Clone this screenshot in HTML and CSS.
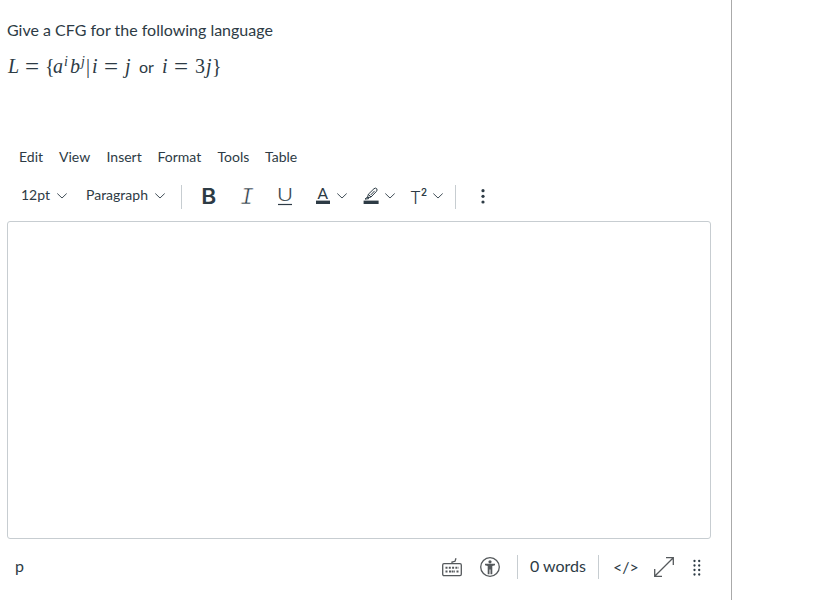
FILE: index.html
```html
<!DOCTYPE html>
<html lang="en">
    <head>
        <meta charset="UTF-8"><meta name="viewport" content="width=device-width, initial-scale=1.0"><title>Question</title>
        <link rel="stylesheet" href="styles.css">
    </head>
    <body>
        <div class="question">
            <p class="prompt">Give a CFG for the following language</p>
            <div class="math">
                <i class="cap">L</i><span class="rel">=</span><span class="brace">{</span><i class="base-a">a</i><sup class="sup-i">i</sup><i class="base-b">b</i><sup class="sup-j">j</sup><span class="bar">|</span><i class="var-i">i</i><span class="rel">=</span><i class="var-j">j</i><span class="or">or</span><i class="var-i">i</i><span class="rel">=</span><span class="num">3</span><i class="last-j">j</i><span class="brace">}</span>
            </div>
            <div class="menubar">
                <span class="m-edit">Edit</span>
                <span class="m-view">View</span>
                <span class="m-insert">Insert</span>
                <span class="m-format">Format</span>
                <span class="m-tools">Tools</span>
                <span class="m-table">Table</span>
            </div>
            <div class="toolbar">
                <span class="size">12pt</span>
                <svg class="chevron" viewBox="0 0 10 6"><path d="M.3 .5 5 5 9.7 .5"/></svg>
                <span class="block">Paragraph</span>
                <svg class="chevron" viewBox="0 0 10 6"><path d="M.3 .5 5 5 9.7 .5"/></svg>
                <span class="sep"></span>
                <svg class="tool bold" viewBox="0 0 16 18"><text x="-0.8" y="15.6" textLength="15" lengthAdjust="spacingAndGlyphs">B</text></svg>
                <svg class="tool italic" viewBox="0 0 16 18"><text x="1" y="15.8">I</text></svg>
                <svg class="tool underline" viewBox="0 0 16 18"><text x="0" y="13.2" textLength="16" lengthAdjust="spacingAndGlyphs">U</text><path d="M1 16.5h14"/></svg>
                <svg class="tool color" viewBox="0 0 16 18"><text x="2.6" y="11">A</text><rect x="1" y="12.6" width="14" height="3.4"/></svg>
                <svg class="chevron" viewBox="0 0 10 6"><path d="M.3 .5 5 5 9.7 .5"/></svg>
                <svg class="tool marker" viewBox="0 0 16 18"><path d="M4.6 9.7 5.3 6.3 11 .7Q12.5-.5 13.7.7 14.6 2 13.5 3.3L8 9 4.6 9.7M5.3 6.3 8 9M7.6 7.1 11.6 2.9M2 11.1 4.6 8.9 5.6 10.7z"/><rect x="0.6" y="12.6" width="15" height="3.4"/></svg>
                <svg class="chevron" viewBox="0 0 10 6"><path d="M.3 .5 5 5 9.7 .5"/></svg>
                <svg class="tool super" viewBox="0 0 18 18"><text class="base" x="0" y="16" textLength="11" lengthAdjust="spacingAndGlyphs">T</text><text class="exp" x="11" y="8" textLength="6" lengthAdjust="spacingAndGlyphs">2</text></svg>
                <svg class="chevron" viewBox="0 0 10 6"><path d="M.3 .5 5 5 9.7 .5"/></svg>
                <span class="sep sep-end"></span>
                <svg class="more" viewBox="0 0 4 16"><circle cx="2" cy="1.7" r="1.6"/><circle cx="2" cy="7.3" r="1.6"/><circle cx="2" cy="13" r="1.6"/></svg>
            </div>
            <div class="editor"></div>
            <div class="statusbar">
                <span class="path">p</span>
                <svg class="keyboard" viewBox="0 0 20 20"><rect x=".7" y="6.6" width="18.6" height="12" rx="1.3"/><path d="M10 6.5V5l3-.7 1-3"/><path class="keys" d="M3.5 10.8h2m1.3 0h2m1.3 0h2m1.3 0h3M3.5 14.6h2m1.5 0h6m1.5 0h2"/></svg>
                <svg class="access" viewBox="0 0 20 20"><circle cx="10" cy="10" r="9.3"/><circle class="fill" cx="10" cy="4.8" r="1.6"/><path class="fill" d="M5 6.8h10v1.4l-2.7.7V17.2h-1.8v-4.8h-1v4.8H7.7V8.9L5 8.2z"/></svg>
                <span class="sep"></span>
                <span class="words">0 words</span>
                <span class="sep"></span>
                <span class="code">&lt;/&gt;</span>
                <svg class="expand" viewBox="0 0 20 20"><path d="M.7 19.3 19.3.7M12 .7h7.3V8M.7 12v7.3H8"/></svg>
                <svg class="grip" viewBox="0 0 8 18"><path d="M1.5 3h0M6.2 3h0M1.5 7.5h0M6.2 7.5h0M1.5 12h0M6.2 12h0M1.5 16.5h0M6.2 16.5h0"/></svg>
            </div>
        </div>
    </body>
</html>
```

FILE: styles.css
```css
* {
    box-sizing: border-box;
}
body {
    margin: 0;
    background: #fff;
    color: #2d3b45;
    font-family: Lato, "Liberation Sans", sans-serif;
}
.question {
    width: 732px;
    height: 600px;
    padding: 18px 20px 0 7px;
    border-right: 1px solid #aaa;
    overflow: hidden;
}
.prompt {
    margin: 0;
    font-size: 16px;
    line-height: 24px;
}
.math {
    display: flex;
    align-items: baseline;
    height: 28px;
    margin-top: 10px;
    padding-left: 1px;
    font: 20px/28px "Liberation Serif", serif;
}
.math i, .math span {
    flex: none;
}
.cap {
    width: 12px;
}
.math .rel {
    width: 26px;
    padding-left: 5px;
    font-size: 25px;
    line-height: 20px;
    transform: translateY(2px);
}
.brace {
    width: 8px;
}
.math sup {
    flex: none;
    font-size: 14px;
    font-style: italic;
    line-height: 1;
    align-self: flex-start;
    margin-top: 3px;
}
.base-a {
    width: 11px;
}
.sup-i {
    width: 6px;
}
.base-b {
    width: 10px;
}
.sup-j {
    width: 6px;
    padding-left: 1px;
}
.bar {
    width: 6px;
}
.var-i {
    width: 7px;
}
.var-j {
    width: 15px;
    margin-left: -6px;
    padding-left: 1px;
}
.cap + .rel {
    width: 25px;
}
.bar + .var-i + .rel {
    width: 31px;
}
.math .or {
    width: 23px;
    font: 16px Lato, sans-serif;
}
.num {
    width: 10px;
}
.last-j {
    width: 7px;
    padding-left: 1px;
}
.menubar {
    display: flex;
    height: 20px;
    margin-top: 67px;
    padding-left: 12px;
    font-size: 14px;
    line-height: 20px;
}
.menubar span {
    flex: none;
}
.m-edit {
    width: 40px;
}
.m-view {
    width: 47.5px;
}
.m-insert {
    width: 51px;
}
.m-format {
    width: 60px;
}
.m-tools {
    width: 47.5px;
}
.toolbar {
    display: flex;
    align-items: center;
    height: 26px;
    margin-top: 17px;
    padding-left: 14px;
    font-size: 14px;
}
.toolbar > *, .statusbar > * {
    flex: none;
}
svg {
    display: block;
    fill: none;
    stroke: #2d3b45;
    overflow: visible;
}
svg text {
    fill: #2d3b45;
    stroke: none;
}
.size, .block {
    padding-bottom: 6px;
}
.size {
    width: 36px;
}
.block {
    width: 69px;
    margin-left: 19px;
}
.chevron {
    width: 10px;
    height: 6px;
    margin-bottom: 2px;
    stroke-width: .9;
}
.sep {
    width: 1px;
    height: 24px;
    background: #c7cdd1;
}
.toolbar .sep {
    margin-left: 16px;
}
.tool {
    width: 16px;
    height: 18px;
}
.tool rect, .more {
    fill: #2d3b45;
    stroke: none;
}
.bold {
    margin-left: 20px;
    font: 600 21.5px Inter, sans-serif;
}
.italic {
    margin-left: 21px;
    font: italic 23px "Liberation Mono", monospace;
}
.italic text {
    stroke: #fff;
    stroke-width: .5px;
}
.underline {
    margin-left: 22px;
    font: 300 17.5px Lato, sans-serif;
}
.underline text {
    stroke: #2d3b45;
    stroke-width: .2px;
}
.underline path {
    stroke-width: 1.2;
}
.color {
    margin-left: 22px;
    font: 15.5px Lato, sans-serif;
}
.color + .chevron, .marker + .chevron {
    margin-left: 6px;
}
.marker {
    margin-left: 16px;
}
.super {
    width: 18px;
    margin-left: 15px;
}
.super + .chevron {
    margin-left: 5px;
}
.base {
    font: 300 17px Inter, sans-serif;
}
.exp {
    font: 600 10px Inter, sans-serif;
}
.toolbar .sep-end {
    margin-left: 12px;
}
.more {
    width: 4px;
    height: 16px;
    margin-left: 25px;
}
.editor {
    width: 704px;
    height: 318px;
    margin-top: 11px;
    border: 1px solid #c7cdd1;
    border-radius: 3px;
}
.statusbar {
    display: flex;
    align-items: center;
    height: 24px;
    margin-top: 16px;
    padding-left: 8px;
    font-size: 16px;
}
.path {
    width: 427px;
    padding-bottom: 4px;
}
.keyboard, .access, .expand {
    width: 20px;
    height: 20px;
    stroke: #55595c;
    stroke-width: 1.3;
}
.keys {
    stroke-width: 2;
    stroke-dasharray: 2 .6;
}
.access {
    margin-left: 18px;
}
.access .fill {
    fill: #55595c;
    stroke: none;
}
.access + .sep {
    margin-left: 17px;
}
.words {
    width: 80px;
    padding: 0 0 4px 12px;
    white-space: nowrap;
}
.code {
    width: 26px;
    margin-left: 14px;
    padding-bottom: 1px;
}
.expand {
    margin-left: 15px;
}
.grip {
    width: 8px;
    height: 18px;
    margin-left: 19px;
    stroke-width: 2.3;
    stroke-linecap: round;
}
```
